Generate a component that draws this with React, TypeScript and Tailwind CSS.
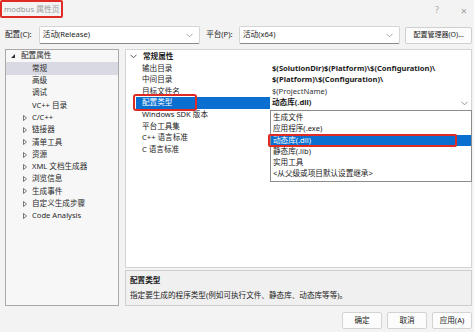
import React from "react";

const tree = [
  { t: "配置属性", level: 0 },
  { t: "常规", level: 1, selected: true },
  { t: "高级", level: 1 },
  { t: "调试", level: 1 },
  { t: "VC++ 目录", level: 1 },
  { t: "C/C++", level: 1, arrow: true },
  { t: "链接器", level: 1, arrow: true },
  { t: "清单工具", level: 1, arrow: true },
  { t: "资源", level: 1, arrow: true },
  { t: "XML 文档生成器", level: 1, arrow: true },
  { t: "浏览信息", level: 1, arrow: true },
  { t: "生成事件", level: 1, arrow: true },
  { t: "自定义生成步骤", level: 1, arrow: true },
  { t: "Code Analysis", level: 1, arrow: true },
];

const props = [
  { label: "输出目录", value: "$(SolutionDir)$(Platform)\\$(Configuration)\\", bold: true },
  { label: "中间目录", value: "$(Platform)\\$(Configuration)\\", bold: true },
  { label: "目标文件名", value: "$(ProjectName)" },
  { label: "配置类型", value: "动态库(.dll)", bold: true, selected: true },
  { label: "Windows SDK 版本", value: "" },
  { label: "平台工具集", value: "" },
  { label: "C++ 语言标准", value: "" },
  { label: "C 语言标准", value: "" },
];

const options = ["生成文件", "应用程序(.exe)", "动态库(.dll)", "静态库(.lib)", "实用工具", "<从父级或项目默认设置继承>"];

function Chevron({ className = "" }: { className?: string }) {
  return (
    <svg width="7" height="5" viewBox="0 0 7 5" className={className}>
      <path d="M0.5 0.8 L3.5 3.8 L6.5 0.8" fill="none" stroke="currentColor" strokeWidth="0.9" />
    </svg>
  );
}

function Combo({ text, className }: { text: string; className: string }) {
  return (
    <div className={`h-[18px] flex items-center justify-between bg-white border border-[#d5d5d5] border-b-[#8a8a8a] rounded-[2px] pl-[3px] pr-[6px] ${className}`}>
      <span>{text}</span>
      <Chevron className="text-[#999]" />
    </div>
  );
}

export default function App() {
  return (
    <div className="w-[474px] h-[332px] bg-[#f3f3f3] flex flex-col text-[7.6px] text-[#1b1b1b] font-['Noto_Sans','Noto_Sans_CJK_SC',sans-serif] overflow-hidden">
      {/* title bar */}
      <div className="relative h-[20px] flex items-center justify-between pl-[4px] pr-[7px]">
        <span className="text-[7.8px] text-[#9a9a9a]">modbus 属性页</span>
        <div className="flex items-center gap-[22px] text-[#a0a0a0]">
          <span className="text-[8px]">?</span>
          <span className="text-[11px] leading-none">×</span>
        </div>
        <div className="absolute left-0 top-0 w-[63px] h-[18px] border-2 border-[#e02a24] rounded-[2px]" />
      </div>

      {/* config row */}
      <div className="mt-[6px] h-[18px] flex items-center pl-[5px] pr-[2px]">
        <span className="w-[34px]">配置(C):</span>
        <Combo text="活动(Release)" className="w-[162px]" />
        <span className="ml-[6px] w-[33px]">平台(P):</span>
        <Combo text="活动(x64)" className="w-[162px]" />
        <div className="ml-[5px] w-[67px] h-[17px] flex items-center justify-center bg-[#fbfbfb] border border-[#cfcfcf] rounded-[2px] text-[7px] whitespace-nowrap">
          配置管理器(O)...
        </div>
      </div>

      {/* main area */}
      <div className="mt-[5px] h-[257px] flex pl-[5px] pr-[2px] gap-[6px]">
        <div className="w-[114px] bg-[#f7f7f7] border border-[#a9a9a9] flex flex-col text-[#2a2a2a]">
          {tree.map((n, i) => (
            <div key={i} className={`h-[12.3px] flex items-center ${n.selected ? "bg-[#d9d9e4]" : ""}`}>
              {n.level === 0 ? (
                <>
                  <svg width="4" height="4" viewBox="0 0 4 4" className="ml-[5px] mr-[6px]">
                    <path d="M4 0 L4 4 L0 4 Z" fill="#333" />
                  </svg>
                  <span>{n.t}</span>
                </>
              ) : (
                <>
                  <span className="w-[17px]" />
                  <span className="w-[9px] flex">
                    {n.arrow && (
                      <svg width="4" height="6" viewBox="0 0 4 6">
                        <path d="M0.5 0.5 L3.5 3 L0.5 5.5 Z" fill="none" stroke="#555" strokeWidth="0.8" />
                      </svg>
                    )}
                  </span>
                  <span>{n.t}</span>
                </>
              )}
            </div>
          ))}
        </div>

        <div className="flex-1 flex flex-col gap-[2px]">
          {/* property grid */}
          <div className="relative h-[220px] bg-white border border-[#d4d4d4] flex flex-col">
            <div className="h-[12.6px] flex items-center">
              <Chevron className="ml-[4px] mr-[6px] text-[#444]" />
              <span className="font-bold">常规属性</span>
            </div>
            {props.map((p, i) => (
              <div key={i} className="h-[11.6px] flex items-center">
                <div className={`ml-[10px] w-[134px] h-full flex items-center pl-[6px] ${p.selected ? "bg-[#0a6fd0] text-white" : ""}`}>
                  {p.label}
                </div>
                <div className="flex-1 h-full flex items-center justify-between pl-[2px] pr-[3px]">
                  <span className={p.bold ? "font-bold" : "text-[#333]"}>{p.value}</span>
                  {p.selected && <Chevron className="text-[#888]" />}
                </div>
              </div>
            ))}

            {/* dropdown list */}
            <div className="absolute left-[144px] top-[60px] w-[202px] bg-white border border-[#8c8c8c] flex flex-col py-[1px]">
              {options.map((o, i) => (
                <div key={i} className={`relative h-[11.3px] flex items-center pl-[2px] ${i === 2 ? "bg-[#0a6fd0] text-white" : ""}`}>
                  {o}
                  {i === 2 && <div className="absolute -left-[3px] -top-[1px] w-[189px] h-[13px] border-2 border-[#e02a24] rounded-[2px]" />}
                </div>
              ))}
            </div>

            {/* highlight box on 配置类型 */}
            <div className="absolute left-[7px] top-[44px] w-[64px] h-[17px] border-2 border-[#e02a24] rounded-[3px]" />
          </div>

          {/* description */}
          <div className="h-[36px] bg-[#f0f0f0] border border-[#cdcdcd] flex flex-col justify-center gap-[3px] pl-[4px]">
            <span className="font-bold">配置类型</span>
            <span>指定要生成的程序类型(例如可执行文件、静态库、动态库等等)。</span>
          </div>
        </div>
      </div>

      {/* buttons */}
      <div className="mt-[6px] flex justify-end gap-[5px] pr-[2px]">
        {["确定", "取消", "应用(A)"].map((b) => (
          <div key={b} className="w-[40px] h-[17px] flex items-center justify-center bg-[#fcfcfc] border border-[#d3d3d3] rounded-[2px]">
            {b}
          </div>
        ))}
      </div>
    </div>
  );
}
